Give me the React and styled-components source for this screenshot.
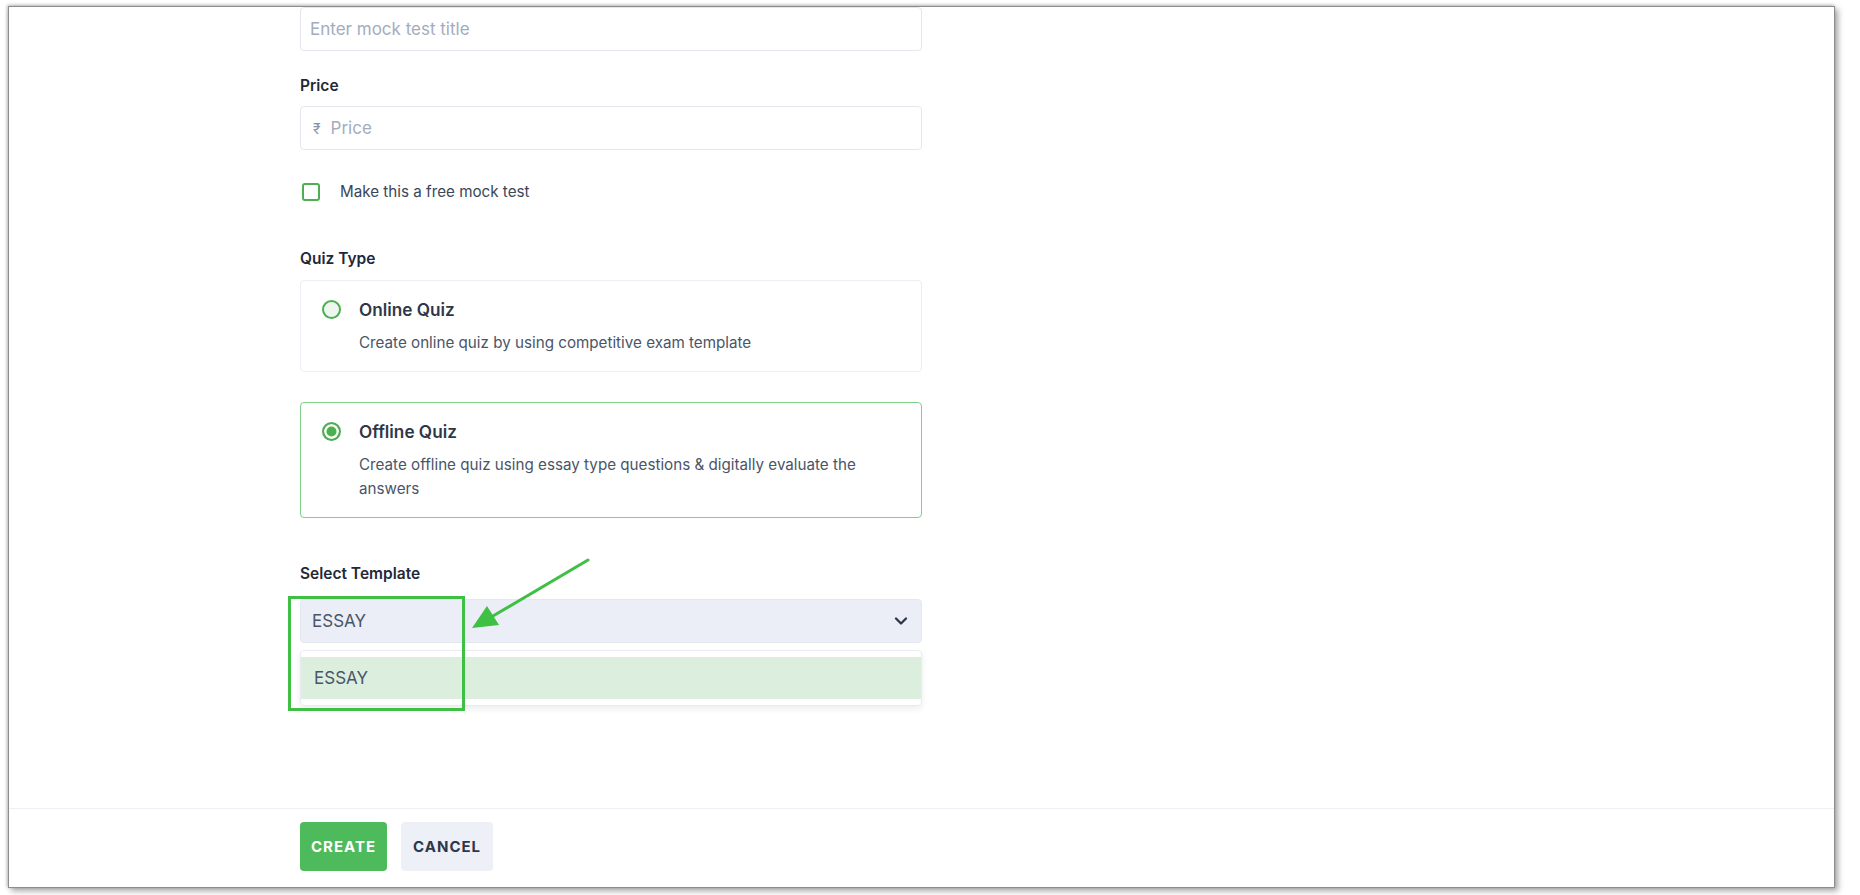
import React from "react";
import styled, { createGlobalStyle } from "styled-components";
import { ChevronDown } from "lucide-react";

const GlobalStyle = createGlobalStyle`
  * { box-sizing: border-box; }
  html, body {
    margin: 0;
    padding: 0;
    background: #ffffff;
    font-family: Inter, "Noto Sans", "Liberation Sans", sans-serif;
    color: #2d3748;
  }
`;

const Page = styled.div`
  width: 1860px;
  height: 895px;
  padding: 6px 25px 7px 8px;
  display: flex;
`;

const Frame = styled.div`
  position: relative;
  flex: 1;
  display: flex;
  flex-direction: column;
  background: #ffffff;
  border: 1px solid #8d8d8d;
  box-shadow: 3px 3px 6px rgba(0, 0, 0, 0.35), -1px -1px 3px rgba(0, 0, 0, 0.25);
  overflow: hidden;
`;

const FormBody = styled.div`
  flex: 1;
  padding: 0 0 0 291px;
`;

const FormColumn = styled.div`
  width: 622px;
  display: flex;
  flex-direction: column;
`;

const Label = styled.div`
  font-size: 15.5px;
  font-weight: 600;
  line-height: 20px;
  color: #1f2937;
  margin: ${(p) => p.margin || "0"};
`;

const TextField = styled.div`
  height: 44px;
  border: 1px solid #e4e7ee;
  border-radius: 4px;
  display: flex;
  align-items: center;
  padding: 0 10px 0 9px;
  gap: 10px;
  font-size: 17px;
  color: #a3acbf;
  margin: ${(p) => p.margin || "0"};
`;

const Rupee = styled.span`
  font-size: 14px;
  color: #8a94a8;
  margin-left: 3px;
`;

const CheckRow = styled.div`
  display: flex;
  align-items: center;
  gap: 20px;
  margin: 32px 0 0 2px;
  font-size: 15.2px;
  color: #3b4658;
`;

const CheckBox = styled.span`
  width: 18px;
  height: 18px;
  border: 2px solid #4caf50;
  border-radius: 3px;
`;

const QuizCard = styled.div`
  border: 1px solid ${(p) => (p.active ? "#7fd08a" : "#eceef3")};
  border-radius: 4px;
  padding: 18px 20px 16px 21px;
  display: flex;
  gap: 18px;
  margin: ${(p) => p.margin || "0"};
`;

const Radio = styled.span`
  flex: none;
  width: 19px;
  height: 19px;
  margin-top: 1px;
  border-radius: 50%;
  border: 2px solid #4caf50;
  background: ${(p) => (p.checked ? "#4caf50" : "#eef7ef")};
  box-shadow: ${(p) => (p.checked ? "inset 0 0 0 2.5px #ffffff" : "none")};
`;

const CardText = styled.div`
  display: flex;
  flex-direction: column;
`;

const CardTitle = styled.div`
  font-size: 17.2px;
  font-weight: 600;
  line-height: 22px;
  color: #2d3748;
  margin-bottom: 10px;
`;

const CardDesc = styled.div`
  font-size: 15.2px;
  line-height: 24px;
  color: #4a5568;
`;

const SelectBox = styled.div`
  height: 44px;
  margin-top: 15px;
  background: #ebeef6;
  border: 1px solid #e3e7f0;
  border-radius: 4px;
  display: flex;
  align-items: center;
  justify-content: space-between;
  padding: 0 10px 0 11px;
  font-size: 17px;
  color: #4a5568;
`;

const Menu = styled.div`
  margin-top: 7px;
  padding: 6px 0;
  border: 1px solid #e8ebf2;
  border-radius: 4px;
  box-shadow: 0 3px 6px rgba(20, 30, 60, 0.08);
`;

const MenuOption = styled.div`
  height: 42px;
  display: flex;
  align-items: center;
  padding: 0 13px;
  background: ${(p) => (p.selected ? "#dcefdf" : "transparent")};
  font-size: 17px;
  color: #4a5568;
`;

const Footer = styled.div`
  border-top: 1px solid #eef0f5;
  padding: 13px 0 16px 291px;
  display: flex;
  gap: 14px;
`;

const Button = styled.button`
  height: 49px;
  padding: 0 ${(p) => (p.primary ? "11px" : "12px")};
  border: none;
  border-radius: 4px;
  font-family: Inter, "Liberation Sans", sans-serif;
  font-size: 15px;
  font-weight: 700;
  letter-spacing: 1px;
  background: ${(p) => (p.primary ? "#4dba5b" : "#edf0f7")};
  color: ${(p) => (p.primary ? "#ffffff" : "#2d3748")};
`;

const HighlightBox = styled.div`
  position: absolute;
  left: 279px;
  top: 589px;
  width: 177px;
  height: 115px;
  border: 3px solid #3fbf44;
  pointer-events: none;
`;

const ArrowLayer = styled.svg`
  position: absolute;
  left: 448px;
  top: 546px;
  pointer-events: none;
`;

function App() {
  return (
    <Page>
      <GlobalStyle />
      <Frame>
        <FormBody>
          <FormColumn>
            <TextField>Enter mock test title</TextField>
            <Label margin="25px 0 0">Price</Label>
            <TextField margin="10px 0 0">
              <Rupee>₹</Rupee>
              <span>Price</span>
            </TextField>
            <CheckRow>
              <CheckBox />
              <span>Make this a free mock test</span>
            </CheckRow>
            <Label margin="48px 0 0">Quiz Type</Label>
            <QuizCard margin="11px 0 0">
              <Radio />
              <CardText>
                <CardTitle>Online Quiz</CardTitle>
                <CardDesc>Create online quiz by using competitive exam template</CardDesc>
              </CardText>
            </QuizCard>
            <QuizCard active margin="30px 0 0">
              <Radio checked />
              <CardText>
                <CardTitle>Offline Quiz</CardTitle>
                <CardDesc>
                  Create offline quiz using essay type questions &amp; digitally evaluate the
                  <br />
                  answers
                </CardDesc>
              </CardText>
            </QuizCard>
            <Label margin="46px 0 0">Select Template</Label>
            <SelectBox>
              <span>ESSAY</span>
              <ChevronDown size={20} strokeWidth={2.8} color="#2d3748" />
            </SelectBox>
            <Menu>
              <MenuOption selected>ESSAY</MenuOption>
            </Menu>
          </FormColumn>
        </FormBody>
        <Footer>
          <Button primary>CREATE</Button>
          <Button>CANCEL</Button>
        </Footer>
        <HighlightBox />
        <ArrowLayer width="160" height="100" viewBox="0 0 160 100">
          <line x1="131" y1="7" x2="36" y2="63" stroke="#3fbf44" strokeWidth="3" strokeLinecap="round" />
          <polygon points="15,75 30,53 42,72" fill="#3fbf44" />
        </ArrowLayer>
      </Frame>
    </Page>
  );
}

export default App;
